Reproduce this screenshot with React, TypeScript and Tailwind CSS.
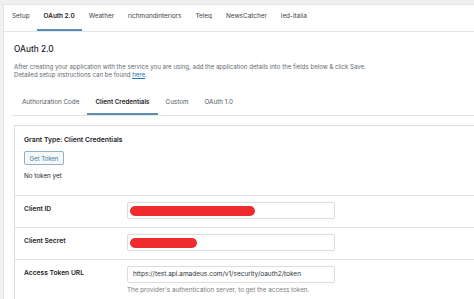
import React from 'react'

const topTabs = ['Setup', 'OAuth 2.0', 'Weather', 'richmondinteriors', 'Teleq', 'NewsCatcher', 'led-italia']
const subTabs = ['Authorization Code', 'Client Credentials', 'Custom', 'OAuth 1.0']

function Row({ label, children, last }: { label: string; children: React.ReactNode; last?: boolean }) {
  return (
    <div className={`flex border-t border-[#e2e4e7] pl-[9px] pt-[6px] ${last ? 'h-[40px]' : 'h-[32px]'}`}>
      <div className="w-[103px] pt-[3px] text-[6.7px] font-semibold leading-[8px] text-[#1d2327]">{label}</div>
      <div className="flex flex-col">{children}</div>
    </div>
  )
}

export default function App() {
  return (
    <div
      className="w-[474px] h-[299px] overflow-hidden bg-[#f0f0f1] pl-[3px] pt-[4px]"
      style={{ fontFamily: 'Inter, "Noto Sans", sans-serif' }}
    >
      <div className="h-full bg-white border-l border-t border-[#e2e4e7]">
        {/* top tabs */}
        <div className="flex h-[27px] border-b border-[#e2e4e7] pl-[1px]">
          {topTabs.map(t => (
            <div
              key={t}
              className={`flex items-center px-[7px] text-[6.4px] border-b-2 ${
                t === 'OAuth 2.0' ? 'font-semibold text-[#1d2327] border-[#5b8db0]' : 'text-[#3c434a] border-transparent'
              }`}
            >
              {t}
            </div>
          ))}
        </div>

        <div className="pl-[10px]">
          <h2 className="mt-[12px] text-[8.3px] leading-[10px] font-medium text-[#1d2327]">OAuth 2.0</h2>
          <p className="mt-[9px] text-[6.1px] leading-[8px] text-[#646970]">
            After creating your application with the service you are using, add the application details into the fields below &amp; click Save.
            <br />
            Detailed setup instructions can be found <span className="text-[#2271b1] underline">here</span>.
          </p>

          {/* sub tabs */}
          <div className="-ml-[2px] mt-[13px] flex h-[24px] border-b border-[#e2e4e7] pl-[2px]">
            {subTabs.map(t => (
              <div
                key={t}
                className={`flex items-center px-[8px] text-[6.3px] border-b-2 ${
                  t === 'Client Credentials' ? 'font-semibold text-[#1d2327] border-[#5b8db0]' : 'text-[#50575e] border-transparent'
                }`}
              >
                {t}
              </div>
            ))}
          </div>

          {/* settings box */}
          <div className="mt-[9px] border-l border-t border-[#dcdcde] bg-white">
            <div className="pl-[9px] pt-[10px] pb-[15px]">
              <div className="text-[6.8px] font-semibold leading-[8px] text-[#1d2327]">Grant Type: Client Credentials</div>
              <div className="mt-[7px] flex h-[14px] w-[40px] items-center justify-center rounded-[2px] border border-[#8fb0c6] bg-[#f6f7f7] text-[6px] text-[#3f7aa0]">
                Get Token
              </div>
              <div className="mt-[7px] text-[6.3px] leading-[8px] text-[#1d2327]">No token yet</div>
            </div>

            <Row label="Client ID">
              <div className="flex h-[17px] w-[208px] items-center rounded-[2px] border border-[#dcdcde] pl-[2px]">
                <div className="h-[10px] w-[125px] rounded-full bg-[#ef2b2d]" />
              </div>
            </Row>
            <Row label="Client Secret">
              <div className="flex h-[17px] w-[208px] items-center rounded-[2px] border border-[#dcdcde] pl-[2px]">
                <div className="h-[10px] w-[67px] rounded-full bg-[#ef2b2d]" />
              </div>
            </Row>
            <Row label="Access Token URL" last>
              <div className="flex h-[17px] w-[208px] items-center rounded-[2px] border border-[#dcdcde] pl-[5px] text-[6.5px] text-[#2c3338]">
                https://test.api.amadeus.com/v1/security/oauth2/token
              </div>
              <div className="mt-[3px] text-[6.3px] leading-[8px] text-[#787c82]">
                The provider's authentication server, to get the access token.
              </div>
            </Row>
          </div>
        </div>
      </div>
    </div>
  )
}
